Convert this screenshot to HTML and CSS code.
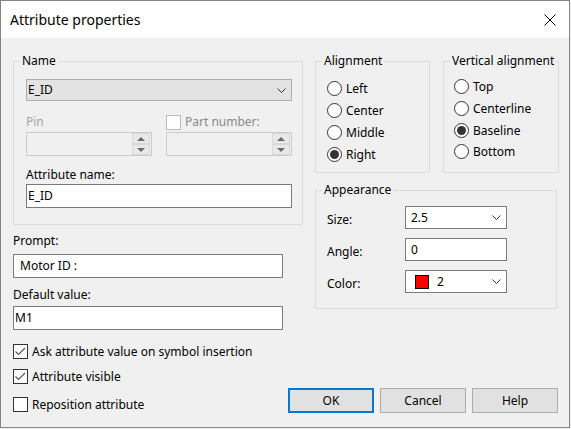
FILE: index.html
```html
<!DOCTYPE html>
<html>
<head>
<meta charset="utf-8">
<link rel="stylesheet" href="styles.css">
</head>
<body>
<div class="window">
  <div class="titlebar">
    <span class="title">Attribute properties</span>
    <svg class="close" width="12" height="12" viewBox="0 0 12 12"><path d="M0.5 0.5 L11.5 11.5 M11.5 0.5 L0.5 11.5" stroke="#000" stroke-width="1" fill="none"/></svg>
  </div>
  <div class="content">
    <div class="col-left">
      <fieldset class="group name-group">
        <legend>Name</legend>
        <div class="group-body name-body">
          <div class="combo combo-list">
            <span class="combo-text">E_ID</span>
            <svg class="chev" width="9" height="5" viewBox="0 0 9 5"><path d="M0.5 0.5 L4.5 4.5 L8.5 0.5" stroke="#333" fill="none"/></svg>
          </div>
          <div class="pin-row">
            <div class="pin-cell">
              <div class="line disabled-light">Pin</div>
              <div class="spin">
                <div class="spin-btns">
                  <span class="spin-btn"><span class="tri-up"></span></span>
                  <span class="spin-btn"><span class="tri-down"></span></span>
                </div>
              </div>
            </div>
            <div class="pin-cell">
              <div class="check line disabled">
                <span class="box box-disabled"></span>
                <span>Part number:</span>
              </div>
              <div class="spin">
                <div class="spin-btns">
                  <span class="spin-btn"><span class="tri-up"></span></span>
                  <span class="spin-btn"><span class="tri-down"></span></span>
                </div>
              </div>
            </div>
          </div>
          <div class="line attr-label">Attribute name:</div>
          <div class="edit edit-tight attr-edit">E_ID</div>
        </div>
      </fieldset>
      <div class="line prompt-label">Prompt:</div>
      <div class="edit edit-wide prompt-edit">Motor ID :</div>
      <div class="line default-label">Default value:</div>
      <div class="edit edit-tight default-edit">M1</div>
    </div>
    <div class="col-right">
      <div class="align-row">
        <fieldset class="group align-group">
          <legend>Alignment</legend>
          <div class="group-body radios align-body">
            <div class="radio"><span class="circle"></span><span>Left</span></div>
            <div class="radio"><span class="circle"></span><span>Center</span></div>
            <div class="radio"><span class="circle"></span><span>Middle</span></div>
            <div class="radio"><span class="circle on"></span><span>Right</span></div>
          </div>
        </fieldset>
        <fieldset class="group valign-group">
          <legend>Vertical alignment</legend>
          <div class="group-body radios valign-body">
            <div class="radio"><span class="circle"></span><span>Top</span></div>
            <div class="radio"><span class="circle"></span><span>Centerline</span></div>
            <div class="radio"><span class="circle on"></span><span>Baseline</span></div>
            <div class="radio"><span class="circle"></span><span>Bottom</span></div>
          </div>
        </fieldset>
      </div>
      <fieldset class="group appearance">
        <legend>Appearance</legend>
        <div class="group-body app-body">
          <div class="app-label">Size:</div>
          <div class="combo combo-white">
            <span class="combo-text">2.5</span>
            <svg class="chev" width="9" height="5" viewBox="0 0 9 5"><path d="M0.5 0.5 L4.5 4.5 L8.5 0.5" stroke="#333" fill="none"/></svg>
          </div>
          <div class="app-label">Angle:</div>
          <div class="edit edit-app">0</div>
          <div class="app-label">Color:</div>
          <div class="combo combo-white color-combo">
            <span class="swatch"></span>
            <span class="combo-text color-text">2</span>
            <svg class="chev" width="9" height="5" viewBox="0 0 9 5"><path d="M0.5 0.5 L4.5 4.5 L8.5 0.5" stroke="#333" fill="none"/></svg>
          </div>
        </div>
      </fieldset>
    </div>
    <div class="bottom">
      <div class="checks">
        <div class="check check-row first">
          <span class="box"><svg width="13" height="13" viewBox="0 0 13 13"><path d="M1.5 6.5 L4.5 9.5 L11 3" stroke="#555" stroke-width="1.2" fill="none"/></svg></span>
          <span>Ask attribute value on symbol insertion</span>
        </div>
        <div class="check check-row second">
          <span class="box"><svg width="13" height="13" viewBox="0 0 13 13"><path d="M1.5 6.5 L4.5 9.5 L11 3" stroke="#555" stroke-width="1.2" fill="none"/></svg></span>
          <span>Attribute visible</span>
        </div>
        <div class="check check-row third">
          <span class="box"></span>
          <span>Reposition attribute</span>
        </div>
      </div>
      <div class="buttons">
        <div class="btn btn-default">OK</div>
        <div class="btn">Cancel</div>
        <div class="btn">Help</div>
      </div>
    </div>
  </div>
</div>
</body>
</html>
```
FILE: styles.css
```css
html, body {
  margin: 0;
  padding: 0;
}
body {
  background: #f0f0f0;
  font-family: "Noto Sans", sans-serif;
  font-size: 12px;
  color: #000;
}
.window {
  width: 570px;
  height: 428px;
  box-sizing: border-box;
  border: 1px solid #858585;
  display: flex;
  flex-direction: column;
  background: #f0f0f0;
}
.titlebar {
  flex: none;
  height: 37px;
  background: #fff;
  display: flex;
  align-items: center;
  justify-content: space-between;
}
.title {
  font-size: 14px;
  line-height: 20px;
  padding-left: 9px;
}
.close {
  display: block;
  margin-right: 13px;
}
.content {
  flex: 1;
  min-height: 0;
  display: grid;
  grid-template-columns: 290px 244px;
  grid-template-rows: auto 1fr;
  column-gap: 12px;
  padding: 15px 10px 14px 12px;
}
.col-left, .col-right {
  display: flex;
  flex-direction: column;
  min-height: 0;
}
.bottom {
  grid-column: 1 / -1;
  display: flex;
  justify-content: space-between;
  align-items: flex-start;
}
.line {
  height: 16px;
  line-height: 16px;
  white-space: nowrap;
}
.group {
  margin: 0;
  padding: 0;
  border: 1px solid #dcdcdc;
  min-width: 0;
}
.group legend {
  margin-left: 6px;
  padding: 0 2px;
  line-height: 16px;
  height: 16px;
}
.name-body {
  padding: 10px 10px 16px 12px;
}
.combo {
  box-sizing: border-box;
  display: flex;
  align-items: center;
  line-height: 16px;
}
.combo-list {
  height: 22px;
  background: #e3e3e3;
  border: 1px solid #adadad;
  padding: 0 5px 0 1px;
}
.combo-text {
  flex: 1;
}
.chev {
  display: block;
  flex: none;
}
.pin-row {
  margin-top: 13px;
  display: grid;
  grid-template-columns: 126px 126px;
  column-gap: 14px;
}
.disabled-light {
  color: #a3a3a3;
}
.disabled {
  color: #8a8a8a;
}
.spin {
  margin-top: 2px;
  height: 24px;
  box-sizing: border-box;
  border: 1px solid #cccccc;
  background: #f0f0f0;
  display: flex;
  justify-content: flex-end;
  padding: 0 1px;
}
.spin-btns {
  width: 18px;
  display: flex;
  flex-direction: column;
}
.spin-btn {
  flex: 1;
  box-sizing: border-box;
  border: 1px solid #d9d9d9;
  background: #e8e8e8;
  display: flex;
  align-items: center;
  justify-content: center;
}
.tri-up, .tri-down {
  width: 0;
  height: 0;
  border-left: 4px solid transparent;
  border-right: 4px solid transparent;
}
.tri-up {
  border-bottom: 4px solid #6a6a6a;
}
.tri-down {
  border-top: 4px solid #6a6a6a;
}
.check {
  display: flex;
  align-items: center;
  gap: 4px;
  white-space: nowrap;
}
.box {
  flex: none;
  width: 15px;
  height: 15px;
  box-sizing: border-box;
  border: 1px solid #333;
  background: #fff;
  display: flex;
  align-items: center;
  justify-content: center;
}
.box svg {
  display: block;
}
.box-disabled {
  border-color: #bcbcbc;
}
.attr-label {
  margin-top: 11px;
}
.edit {
  box-sizing: border-box;
  height: 24px;
  line-height: 22px;
  background: #fff;
  border: 1px solid #7a7a7a;
  white-space: nowrap;
}
.edit-tight {
  padding-left: 1px;
}
.attr-edit {
  margin-top: 1px;
}
.prompt-label {
  margin-top: 8px;
}
.edit-wide {
  padding-left: 6px;
}
.prompt-edit, .default-edit {
  width: 270px;
}
.prompt-edit {
  margin-top: 5px;
}
.default-label {
  margin-top: 9px;
}
.default-edit {
  margin-top: 3px;
}
.check-row {
  height: 15px;
  line-height: 15px;
}
.check-row.first {
  margin-top: 14px;
}
.check-row.second {
  margin-top: 10px;
}
.check-row.third {
  margin-top: 13px;
}
.align-row {
  display: flex;
  gap: 13px;
}
.align-group {
  width: 115px;
  box-sizing: border-box;
}
.valign-group {
  width: 116px;
  box-sizing: border-box;
}
.align-body {
  padding: 8px 0 7px 11px;
}
.valign-body {
  padding: 7px 0 8px 10px;
}
.radio {
  height: 22px;
  display: flex;
  align-items: center;
  gap: 4px;
  white-space: nowrap;
}
.valign-body .radio {
  height: 21.7px;
}
.circle {
  flex: none;
  width: 15px;
  height: 15px;
  box-sizing: border-box;
  border: 1px solid #333;
  border-radius: 50%;
  background: #fff;
  display: flex;
  align-items: center;
  justify-content: center;
}
.circle.on::after {
  content: "";
  width: 9px;
  height: 9px;
  border-radius: 50%;
  background: #333;
}
.appearance {
  margin-top: 9px;
  width: 242px;
  box-sizing: border-box;
}
.app-body {
  padding: 8px 0 15px 11px;
  display: grid;
  grid-template-columns: 78px 102px;
  grid-auto-rows: 23px;
  row-gap: 9px;
}
.app-label {
  padding-top: 6px;
  line-height: 16px;
}
.combo-white {
  height: 23px;
  background: #fff;
  border: 1px solid #7a7a7a;
  padding: 0 5px 0 5px;
}
.edit-app {
  height: 23px;
  line-height: 21px;
  padding-left: 5px;
}
.swatch {
  flex: none;
  width: 14px;
  height: 14px;
  box-sizing: border-box;
  background: #ff0000;
  border: 1px solid #000;
  margin-left: 4px;
  margin-right: 8px;
}
.buttons {
  align-self: flex-end;
  display: flex;
  gap: 6px;
  margin-right: 1px;
}
.btn {
  flex: none;
  width: 86px;
  height: 25px;
  box-sizing: border-box;
  border: 1px solid #adadad;
  background: #e1e1e1;
  display: flex;
  align-items: center;
  justify-content: center;
}
.btn-default {
  border: 2px solid #0078d7;
}
```
